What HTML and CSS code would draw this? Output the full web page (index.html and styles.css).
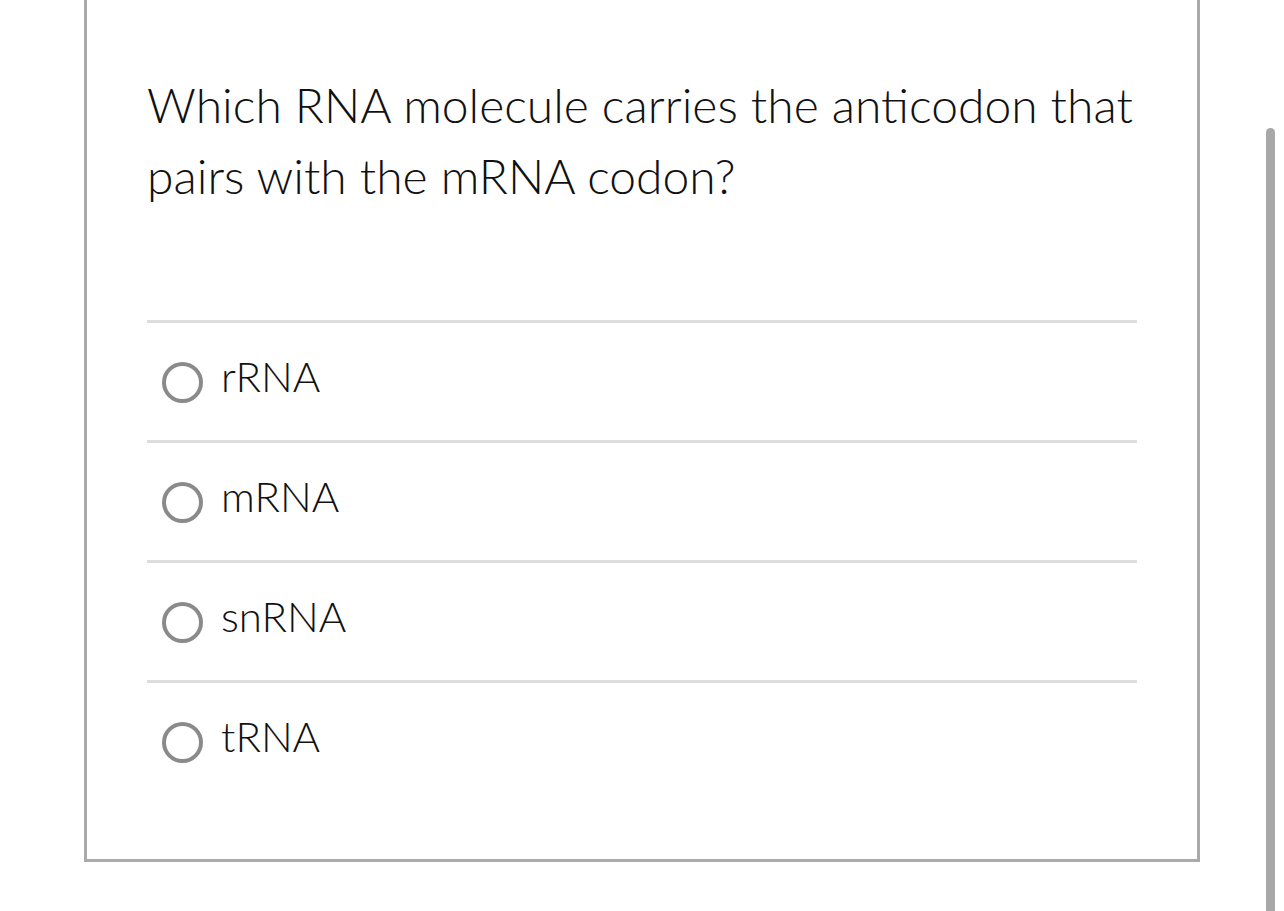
FILE: index.html
```html
<!DOCTYPE html>
<html>
<head>
<meta charset="utf-8">
<link rel="stylesheet" href="styles.css">
</head>
<body>
<div class="page">
  <div class="card">
    <p class="question">Which RNA molecule carries the anticodon that pairs with the mRNA codon?</p>
    <ul class="options">
      <li class="option"><span class="radio"></span><span class="label">rRNA</span></li>
      <li class="option"><span class="radio"></span><span class="label">mRNA</span></li>
      <li class="option"><span class="radio"></span><span class="label">snRNA</span></li>
      <li class="option"><span class="radio"></span><span class="label">tRNA</span></li>
    </ul>
  </div>
</div>
<div class="scrollbar"></div>
</body>
</html>
```
FILE: styles.css
```css
html, body {
  margin: 0;
  padding: 0;
  background: #fff;
  overflow: hidden;
  height: 911px;
}
body {
  font-family: Lato, "Open Sans", sans-serif;
  color: #111;
}
.page {
  padding-left: 84px;
}
.card {
  width: 990px;
  margin-top: -20px;
  border: 3px solid #aaaaaa;
  padding: 86px 60px 59px 60px;
  box-sizing: content-box;
}
.question {
  margin: 0 0 109px 0;
  font-size: 48px;
  line-height: 71px;
  font-weight: 300;
  color: #111;
}
.options {
  list-style: none;
  margin: 0;
  padding: 0;
}
.option {
  border-top: 3px solid #dddddd;
  height: 117px;
  display: flex;
  align-items: center;
  padding-left: 15px;
  gap: 18px;
}
.radio {
  width: 41px;
  height: 41px;
  box-sizing: border-box;
  border: 4px solid #8a8a8a;
  border-radius: 50%;
  flex: none;
  margin-top: 2px;
}
.label {
  font-size: 42px;
  font-weight: 300;
  color: #111;
  line-height: 1;
  margin-bottom: 12px;
}
.scrollbar {
  position: fixed;
  left: 1266px;
  top: 128px;
  width: 9px;
  height: 800px;
  background: #a8a8a8;
  border-radius: 5px 5px 0 0;
}
```
